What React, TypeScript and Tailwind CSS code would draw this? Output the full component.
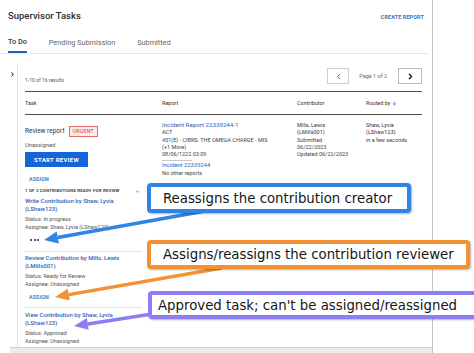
import { ChevronLeft, ChevronRight, ChevronUp, ArrowDown } from 'lucide-react';
import type { ReactNode } from 'react';

function Contribution({
  title,
  user,
  status,
  assignee,
  children,
  last,
}: {
  title: string;
  user: string;
  status: string;
  assignee: string;
  children?: ReactNode;
  last?: boolean;
}) {
  return (
    <div className={last ? '' : 'border-b border-[#e4e4e4]'}>
      <div className="text-[6px] font-medium leading-[7.5px] text-[#2f62b8]">
        <div>{title}</div>
        <div>{user}</div>
      </div>
      <div className="mt-[3px] text-[5.5px] leading-[8px] text-[#555]">
        <div>{status}</div>
        <div>{assignee}</div>
      </div>
      {children}
    </div>
  );
}

function Callout({ className, children }: { className: string; children: ReactNode }) {
  return (
    <div
      className={`absolute flex items-center rounded-[4px] border-[4px] bg-white font-['DejaVu_Sans_Condensed','DejaVu_Sans',sans-serif] text-[14.8px] leading-none text-[#161616] shadow-[1px_1px_2px_rgba(0,0,0,0.3)] ${className}`}
    >
      {children}
    </div>
  );
}

export default function App() {
  return (
    <div className="relative h-[353px] w-[474px] overflow-hidden bg-white font-['Roboto',sans-serif] text-[#333]">
      <div className="flex h-full w-[433px] flex-col border-r border-[#c4c4c4]">
        {/* page header */}
        <div className="flex h-[32px] shrink-0 items-center justify-between pl-[8px] pr-[8px]">
          <h1 className="text-[9.5px] font-medium text-[#2e2e2e]">Supervisor Tasks</h1>
          <span className="mt-[4px] text-[5.3px] font-bold tracking-[0.2px] text-[#3a6cc6]">CREATE REPORT</span>
        </div>

        {/* tabs */}
        <div className="mr-[4px] flex h-[22px] shrink-0 gap-[22px] border-b border-[#e6e6e6] pl-[8px] text-[7.3px]">
          <div className="flex items-center border-b-2 border-[#1f5fc4] pt-[2px] font-medium text-[#333]">To Do</div>
          <div className="flex items-center pt-[2px] text-[#666]">Pending Submission</div>
          <div className="flex items-center pt-[2px] text-[#666]">Submitted</div>
        </div>

        {/* body */}
        <div className="flex min-h-0 flex-1">
          <div className="w-[17px] shrink-0 pl-[9px] pt-[17px] text-[#333]">
            <ChevronRight size={7} strokeWidth={3.5} />
          </div>
          <div className="mt-[11px] flex min-w-0 flex-1 flex-col border-l border-[#e3e3e3] pl-[7px] pr-[10px]">
            {/* pagination */}
            <div className="flex h-[26px] shrink-0 items-start justify-between pt-[3px]">
              <span className="mt-[9px] text-[5px] leading-[6px] text-[#555]">1-10 of 16 results</span>
              <div className="flex items-center">
                <div className="flex h-[16px] w-[22px] items-center justify-center border border-[#cfcfcf] text-[#555]">
                  <ChevronLeft size={9} strokeWidth={2.5} />
                </div>
                <span className="ml-[10px] text-[5.5px] text-[#666]">Page 1 of 2</span>
                <div className="ml-[11px] flex h-[16px] w-[24px] items-center justify-center border border-[#bdbdbd] text-[#111]">
                  <ChevronRight size={9} strokeWidth={3.5} />
                </div>
              </div>
            </div>

            {/* table header */}
            <div className="grid h-[24px] shrink-0 grid-cols-[137px_135px_69px_1fr] items-center border-y-[1.5px] border-[#4d4d4d] text-[5.5px] text-[#333]">
              <span>Task</span>
              <span>Report</span>
              <span>Contributor</span>
              <span className="flex items-center gap-[2px]">
                Routed by <ArrowDown size={5} strokeWidth={3} className="text-[#3a6cc6]" />
              </span>
            </div>

            {/* row */}
            <div className="grid grid-cols-[137px_135px_69px_1fr]">
              <div className="pt-[11px]">
                <div className="flex h-[11px] items-center">
                  <span className="text-[6.5px] text-[#333]">Review report</span>
                  <span className="ml-[4px] flex h-[11px] items-center border border-[#df6d6d] bg-[#fdeaea] px-[3px] text-[5.3px] tracking-[0.2px] text-[#d14343]">
                    URGENT
                  </span>
                </div>
                <div className="mt-[4px] text-[5.8px] leading-[8px] text-[#555]">Unassigned</div>
                <button className="mt-[3px] flex h-[15px] w-[63px] items-center justify-center bg-[#1565d8] text-[6px] font-bold tracking-[0.3px] text-white">
                  START REVIEW
                </button>
                <div className="mt-[8px] pl-[4px] text-[5.3px] font-medium leading-[8px] tracking-[0.2px] text-[#2f62b8]">ASSIGN</div>

                <div className="w-[117px]">
                  <div className="mt-[4px] flex h-[8px] items-center justify-between text-[4.4px] font-bold tracking-[0.15px] text-[#444]">
                    <span>1 OF 3 CONTRIBUTIONS READY FOR REVIEW</span>
                    <ChevronUp size={5} strokeWidth={3} className="mr-[2px] text-[#555]" />
                  </div>
                  <div className="mt-[2px]">
                    <Contribution
                      title="Write Contribution by Shaw, Lyvia"
                      user="(LShaw123)"
                      status="Status: In progress"
                      assignee="Assignee: Shaw, Lyvia (LShaw123)"
                    >
                      <div className="mb-[7.5px] mt-[4.5px] flex h-[8px] items-center gap-[1.5px] pl-[5px]">
                        <span className="h-[2px] w-[2px] rounded-full bg-[#1d2b4f]" />
                        <span className="h-[2px] w-[2px] rounded-full bg-[#1d2b4f]" />
                        <span className="h-[2px] w-[2px] rounded-full bg-[#1d2b4f]" />
                      </div>
                    </Contribution>
                  </div>
                  <div className="mt-[2px]">
                    <Contribution
                      title="Review Contribution by Mills, Lewis"
                      user="(LMills001)"
                      status="Status: Ready for Review"
                      assignee="Assignee: Unassigned"
                    >
                      <div className="mt-[5px] pb-[6px] pl-[4px] text-[5.3px] font-medium leading-[8px] tracking-[0.2px] text-[#2f62b8]">
                        ASSIGN
                      </div>
                    </Contribution>
                  </div>
                  <div className="mt-[3px]">
                    <Contribution
                      title="View Contribution by Shaw, Lyvia"
                      user="(LShaw123)"
                      status="Status: Approved"
                      assignee="Assignee: Unassigned"
                      last
                    />
                  </div>
                </div>
              </div>

              <div className="pt-[7px] text-[5.5px] leading-[7.3px] text-[#444]">
                <div className="text-[6.2px] text-[#2f62b8]">Incident Report 22339244-1</div>
                <div>ACT</div>
                <div>451(E) - CIBRS: THE OMEGA CHARGE - MIS</div>
                <div>(+1 More)</div>
                <div>08/06/1222 03:09</div>
                <div className="mt-[2px] w-[30px] border-t border-[#c8c8c8]" />
                <div className="mt-[1px] text-[5.8px] text-[#2f62b8]">Incident 22339244</div>
                <div>No other reports</div>
              </div>

              <div className="pt-[7px] text-[5.5px] leading-[7.3px] text-[#444]">
                <div className="text-[#333]">Mills, Lewis</div>
                <div className="text-[#333]">(LMills001)</div>
                <div>Submitted</div>
                <div>06/22/2023</div>
                <div>Updated 06/22/2023</div>
              </div>

              <div className="pt-[7px] text-[5.5px] leading-[7.3px] text-[#444]">
                <div className="text-[#333]">Shaw, Lyvia</div>
                <div className="text-[#333]">(LShaw123)</div>
                <div>in a few seconds</div>
              </div>
            </div>
          </div>
        </div>
        <div className="ml-[10px] h-[6px] shrink-0 border-t border-[#cfcfcf] bg-[#ececec]" />
      </div>

      {/* annotation arrows */}
      <svg className="pointer-events-none absolute inset-0" width="474" height="353" viewBox="0 0 474 353">
        <line x1="205" y1="211" x2="57.8" y2="237.5" stroke="#2f84e6" strokeWidth="3.5" />
        <polygon points="44,240 58.9,243.4 56.7,231.6" fill="#2f84e6" />
        <line x1="222" y1="268" x2="68.8" y2="294.6" stroke="#f39233" strokeWidth="3.5" />
        <polygon points="55,297 69.8,300.5 67.8,288.7" fill="#f39233" />
        <line x1="152" y1="314" x2="87.8" y2="323.9" stroke="#8c7ff5" strokeWidth="3.5" />
        <polygon points="74,326 88.7,329.8 86.9,318" fill="#8c7ff5" />
      </svg>

      <Callout className="left-[147px] top-[183px] h-[30px] w-[264px] border-[#2f84e6] pl-[12px]">
        Reassigns the contribution creator
      </Callout>
      <Callout className="left-[147px] top-[240px] h-[29px] w-[323px] border-[#f39233] pl-[12px]">
        Assigns/reassigns the contribution reviewer
      </Callout>
      <Callout className="left-[148px] top-[291px] h-[28px] w-[330px] border-[#8c7ff5] pl-[6px]">
        Approved task; can't be assigned/reassigned
      </Callout>
    </div>
  );
}
